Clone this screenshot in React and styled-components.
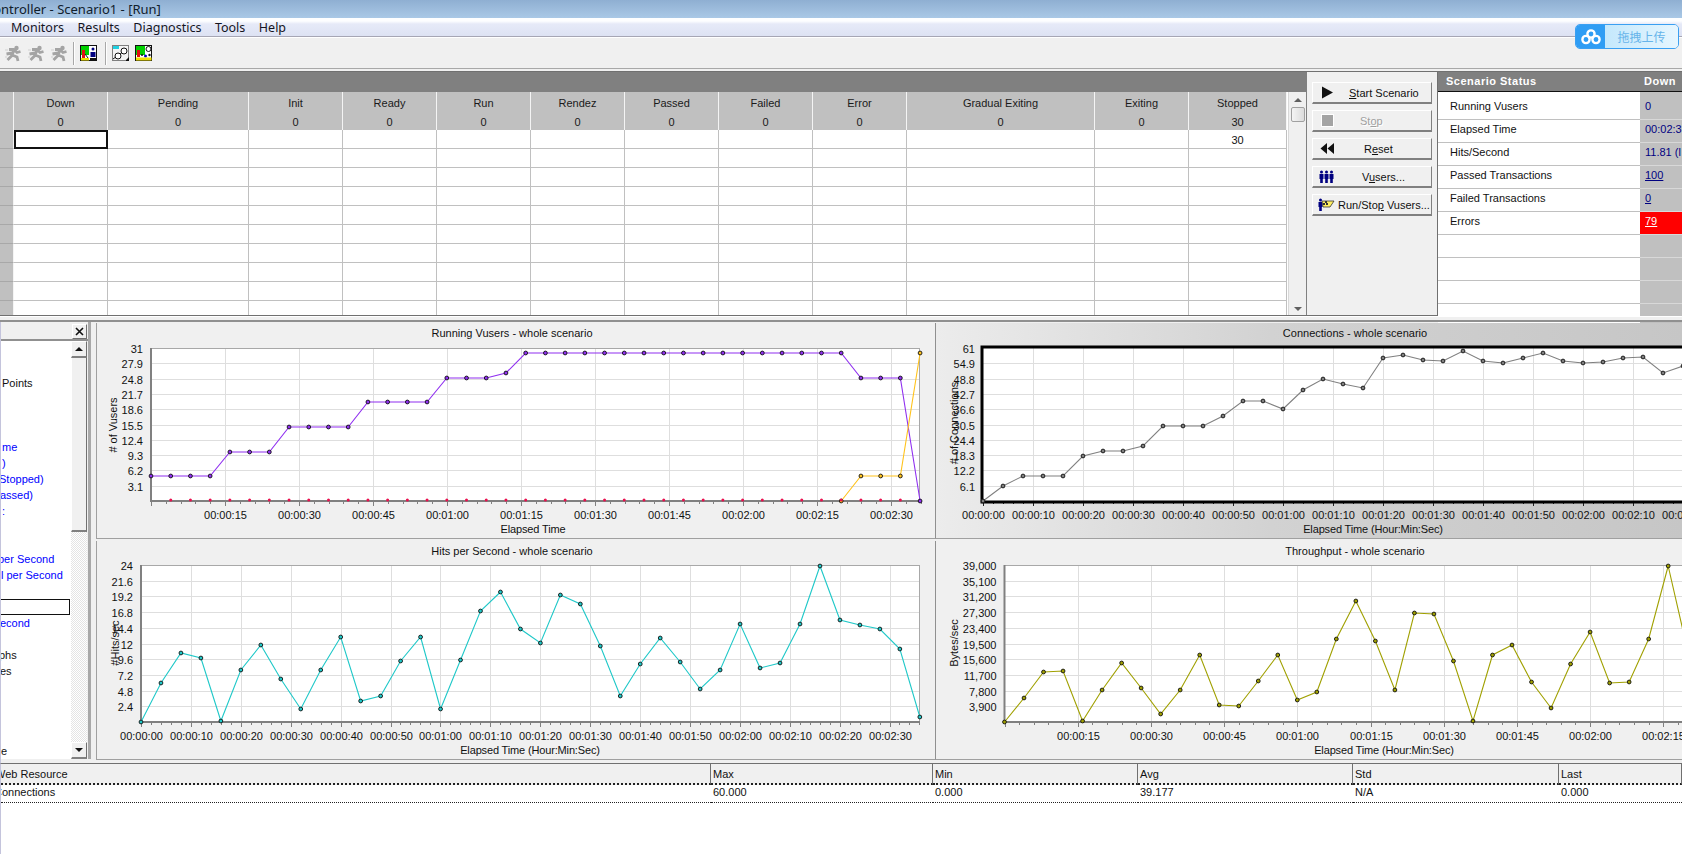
import React from 'react';
import styled, { createGlobalStyle } from 'styled-components';

const Global = createGlobalStyle`
  html, body { margin: 0; padding: 0; background: #f0f0f0; }
  * { box-sizing: border-box; }
`;

const FONT = '"Liberation Sans", Arial, sans-serif';

const Page = styled.div`
  position: relative;
  width: 1682px;
  height: 854px;
  overflow: hidden;
  display: flex;
  flex-direction: column;
  background: #f0f0f0;
  font-family: ${FONT};
  font-size: 11px;
  color: #111;
`;

const TitleBar = styled.div`
  height: 18px;
  flex: none;
  display: flex;
  align-items: center;
  overflow: hidden;
  background: linear-gradient(#8fafd2, #a9c8e6);
  font-family: "Noto Sans", sans-serif;
  font-size: 13px;
  color: #10202c;
  white-space: nowrap;
`;
const TitleText = styled.span`
  margin-left: -15px;
`;

const MenuBar = styled.div`
  height: 19px;
  flex: none;
  display: flex;
  align-items: center;
  gap: 13.5px;
  padding-left: 11px;
  background: linear-gradient(#fdfeff 0, #fdfeff 3px, #e6eaf8 6px, #dde2f3 100%);
  border-bottom: 1px solid #a6a6b4;
  font-family: "Noto Sans", sans-serif;
  font-size: 12.5px;
  color: #14141e;
`;

const Toolbar = styled.div`
  height: 31px;
  flex: none;
  display: flex;
  align-items: center;
  padding-left: 4px;
  background: #f0f0f0;
  border-top: 1px solid #fff;
`;
const ToolbarRule = styled.div`
  height: 3px;
  flex: none;
  border-top: 1px solid #a8a8a8;
  background: #f0f0f0;
`;
const ToolIcon = styled.svg`
  width: 18px;
  height: 17px;
  flex: none;
  margin-right: ${p => p.$gap || 0}px;
  display: block;
`;
const ToolSep = styled.div`
  width: 1px;
  height: 23px;
  flex: none;
  margin-right: ${p => p.$after}px;
  background: #a8a8a8;
  box-shadow: 1px 0 0 #fff;
`;

const TopPane = styled.div`
  height: 245px;
  flex: none;
  display: flex;
  border-top: 1px solid #707070;
  border-bottom: 1px solid #707070;
  background: #f0f0f0;
`;
const GridSide = styled.div`
  width: 1307px;
  flex: none;
  display: flex;
  flex-direction: column;
  border-right: 1px solid #808080;
`;
const GreyBand = styled.div`
  height: 20px;
  flex: none;
  background: #808080;
`;
const GridBody = styled.div`
  flex: 1;
  display: flex;
  min-height: 0;
`;
const VuserGrid = styled.div`
  width: 1288px;
  flex: none;
  overflow: hidden;
  display: grid;
  grid-template-columns: 14px 94px 141px repeat(7, 94px) 188px 94px 98px;
  grid-template-rows: 38px;
  grid-auto-rows: 19px;
  background: #fff;
`;
const HeadCell = styled.div`
  display: flex;
  flex-direction: column;
  align-items: center;
  justify-content: center;
  gap: 7px;
  padding-top: 3px;
  background: #c0c0c0;
  border-right: 1px solid #f4f4f4;
  color: #1a1a1a;
  line-height: 12px;
  &:last-child { border-right: 0; }
`;
const Gutter = styled.div`
  background: #c0c0c0;
  border-right: 1px solid #f4f4f4;
  border-bottom: 1px solid #a8a8a8;
`;
const Cell = styled.div`
  display: flex;
  align-items: center;
  justify-content: center;
  padding-top: 2px;
  border-right: 1px solid #c0c0c0;
  border-bottom: 1px solid #c0c0c0;
  ${p => p.$selected && 'border: 2px solid #111;'}
`;

const GridScroll = styled.div`
  width: 18px;
  flex: none;
  display: flex;
  flex-direction: column;
  align-items: center;
  background: #f0f0f0;
  border-left: 1px solid #d8d8d8;
  padding: 6px 0 4px;
`;
const TinyArrow = styled.div`
  width: 0;
  height: 0;
  border-left: 4px solid transparent;
  border-right: 4px solid transparent;
  ${p => p.$down ? 'border-top: 4px solid #606060;' : 'border-bottom: 4px solid #606060;'}
`;
const GridThumb = styled.div`
  width: 14px;
  height: 15px;
  margin-top: 5px;
  margin-bottom: auto;
  background: linear-gradient(90deg, #f4f4f4, #dcdcdc);
  border: 1px solid #a0a0a0;
  border-radius: 2px;
`;

const ButtonPanel = styled.div`
  width: 130px;
  flex: none;
  display: flex;
  flex-direction: column;
  gap: 6px;
  padding: 10px 5px 0 5px;
  background: #f0f0f0;
`;
const CtlButton = styled.div`
  height: 22px;
  width: 120px;
  flex: none;
  display: flex;
  align-items: center;
  padding-left: ${p => p.$pad}px;
  background: #f0f0f0;
  border-top: 1px solid #fff;
  border-left: 1px solid #fff;
  border-right: 1px solid #808080;
  border-bottom: 2px solid #808080;
  color: ${p => p.$off ? '#a0a0a0' : '#111'};
  text-shadow: ${p => p.$off ? '1px 1px 0 #fff' : 'none'};
  white-space: nowrap;
  u { text-underline-offset: 1px; }
`;
const BtnIcon = styled.svg`
  flex: none;
  display: block;
  margin-right: ${p => p.$gap}px;
`;

const StatusPanel = styled.div`
  flex: 1;
  min-width: 0;
  display: flex;
  flex-direction: column;
  border-left: 1px solid #707070;
`;
const StatusHead = styled.div`
  height: 20px;
  flex: none;
  display: flex;
  align-items: center;
  justify-content: space-between;
  padding: 0 6px 2px 8px;
  background: #808080;
  border-bottom: 1px solid #111;
  color: #fff;
  font-weight: bold;
  letter-spacing: 0.5px;
`;
const StatusRow = styled.div`
  height: ${p => p.$first ? 28 : 23}px;
  flex: none;
  display: grid;
  grid-template-columns: 202px 1fr;
  padding: 0;
`;
const StatusLabel = styled.div`
  display: flex;
  align-items: center;
  padding: 0 0 ${p => p.$first ? 0 : 4}px 12px;
  background: #fff;
  border-bottom: 1px solid #c0c0c0;
`;
const StatusValue = styled.div`
  display: flex;
  align-items: center;
  padding: 0 0 ${p => p.$first ? 0 : 4}px 5px;
  overflow: hidden;
  white-space: nowrap;
  background: ${p => p.$alert ? '#ff0000' : '#c0c0c0'};
  color: ${p => p.$alert ? '#fff' : '#000080'};
  text-decoration: ${p => p.$link ? 'underline' : 'none'};
  border-bottom: 1px solid #d8d8d8;
`;

const Band = styled.div`
  height: 6px;
  flex: none;
  background: #f0f0f0;
  border-top: 1px solid #fff;
  border-bottom: 2px solid #909090;
`;

const MiddlePane = styled.div`
  height: 442px;
  flex: none;
  display: flex;
  border-left: 1px solid #c4c4dc;
  border-bottom: 1px solid #707070;
`;
const LeftPane = styled.div`
  width: 90px;
  flex: none;
  display: flex;
  flex-direction: column;
  height: 437px;
  border-right: 3px solid #a8a8a8;
  background: #f0f0f0;
`;
const PaneHead = styled.div`
  height: 19px;
  flex: none;
  display: flex;
  justify-content: flex-end;
  align-items: flex-start;
  padding: 2px 1px 0 0;
  border-bottom: 2px solid #909090;
`;
const CloseBtn = styled.div`
  width: 15px;
  height: 15px;
  display: flex;
  align-items: center;
  justify-content: center;
  background: #f0f0f0;
  border-top: 1px solid #fff;
  border-left: 1px solid #fff;
  border-right: 1px solid #707070;
  border-bottom: 1px solid #707070;
`;
const PaneBody = styled.div`
  flex: 1;
  display: flex;
  min-height: 0;
`;
const GraphList = styled.div`
  width: 70px;
  flex: none;
  overflow: hidden;
  padding-top: 2px;
  background: #fff;
`;
const GraphItem = styled.div`
  height: 16px;
  display: flex;
  align-items: center;
  padding-left: ${p => p.$boxed ? 0 : 1}px;
  white-space: nowrap;
  color: ${p => p.$blue ? '#0000ff' : '#111'};
  ${p => p.$boxed && 'width: 69px; border: 1px solid #111; border-left: 0;'}
`;
const PaneScroll = styled.div`
  width: 16px;
  flex: none;
  display: flex;
  flex-direction: column;
  background: repeating-conic-gradient(#fff 0 25%, #e4e4e4 0 50%) 0 0 / 2px 2px;
`;
const ScrollBtn = styled.div`
  height: 17px;
  flex: none;
  display: flex;
  align-items: center;
  justify-content: center;
  background: #f0f0f0;
  border-top: 1px solid #fff;
  border-left: 1px solid #fff;
  border-right: 1px solid #707070;
  border-bottom: 2px solid #808080;
  ${p => p.$end && 'margin-top: auto;'}
`;
const BlackArrow = styled.div`
  width: 0;
  height: 0;
  border-left: 4px solid transparent;
  border-right: 4px solid transparent;
  ${p => p.$down ? 'border-top: 4px solid #111;' : 'border-bottom: 4px solid #111;'}
`;
const ScrollTrack = styled.div`
  height: 174px;
  flex: none;
  background: #f0f0f0;
  border-right: 1px solid #707070;
  border-bottom: 2px solid #808080;
  border-left: 1px solid #fff;
`;

const ChartGrid = styled.div`
  margin: 1px 0 0 5px;
  width: 1586px;
  flex: none;
  display: grid;
  grid-template-columns: 840px 746px;
  grid-template-rows: 216px 219px;
  row-gap: 2px;
`;
const ChartPanel = styled.div`
  display: flex;
  flex-direction: column;
  overflow: hidden;
  border-bottom: 1px solid #a0a0a0;
  border-left: ${p => p.$first ? '1px solid #a0a0a0' : '0'};
  border-right: ${p => p.$first ? '1px solid #909090' : '0'};
  background: ${p => p.$active ? 'linear-gradient(90deg, #ececec, #d2d2d2 45%, #c6c6c6)' : '#f0f0f0'};
`;
const ChartTitle = styled.div`
  height: 18px;
  flex: none;
  line-height: 21px;
  text-align: center;
  padding-left: ${p => Math.max(p.$shift * 2, 0)}px;
  padding-right: ${p => Math.max(-p.$shift * 2, 0)}px;
  white-space: nowrap;
`;
const XTitle = styled.div`
  height: 14px;
  flex: none;
  line-height: 14px;
  letter-spacing: -0.15px;
  text-align: center;
  padding-left: ${p => Math.max(p.$shift * 2, 0)}px;
  padding-right: ${p => Math.max(-p.$shift * 2, 0)}px;
  white-space: nowrap;
`;
const Plot = styled.svg`
  display: block;
  flex: none;
  font-family: ${FONT};
  font-size: 11px;
`;

const SummaryTable = styled.div`
  flex: 1;
  background: #fff;
  border-left: 1px solid #c4c4dc;
  overflow: hidden;
`;
const SummaryGrid = styled.div`
  display: grid;
  grid-template-columns: 710px 222px 205px 215px 206px 1fr;
  grid-template-rows: 21px 18px;
`;
const SummaryHead = styled.div`
  display: flex;
  align-items: center;
  padding-left: 2px;
  background: #f0f0f0;
  border-right: 1px solid #707070;
  border-bottom: 2px dotted #222;
  overflow: hidden;
  white-space: nowrap;
  &:last-of-type { border-right: 0; }
`;
const SummaryCell = styled.div`
  display: flex;
  align-items: center;
  padding: 0 0 3px 2px;
  border-bottom: 1px dotted #222;
  white-space: nowrap;
`;
const CutText = styled.span`
  margin-left: ${p => p.$cut}px;
`;

const UploadBadge = styled.div`
  position: absolute;
  top: 24px;
  left: 1575px;
  width: 104px;
  height: 25px;
  display: flex;
  border-radius: 5px;
  overflow: hidden;
  border: 1px solid #3aa0f2;
`;
const UploadIcon = styled.div`
  width: 29px;
  flex: none;
  display: flex;
  align-items: center;
  justify-content: center;
  background: #2f9df4;
`;
const UploadText = styled.div`
  flex: 1;
  display: flex;
  align-items: center;
  justify-content: center;
  background: linear-gradient(90deg, #c4e8fc, #e6f6ff);
  color: #66b4ea;
  font-family: "Noto Sans CJK SC", sans-serif;
  font-size: 12px;
`;

const HEADERS = [
  ['Down', '0'], ['Pending', '0'], ['Init', '0'], ['Ready', '0'], ['Run', '0'], ['Rendez', '0'],
  ['Passed', '0'], ['Failed', '0'], ['Error', '0'], ['Gradual Exiting', '0'], ['Exiting', '0'], ['Stopped', '30'],
];

const STATUS = [
  { label: 'Running Vusers', value: '0' },
  { label: 'Elapsed Time', value: '00:02:3' },
  { label: 'Hits/Second', value: '11.81 (l' },
  { label: 'Passed Transactions', value: '100', link: true },
  { label: 'Failed Transactions', value: '0', link: true },
  { label: 'Errors', value: '79', link: true, alert: true },
  { label: '', value: '' }, { label: '', value: '' }, { label: '', value: '' }, { label: '', value: '' },
];

// the list is scrolled sideways in the screenshot, cut says how far a row sticks out on the left
const GRAPH_ROWS = {
  2: { text: 'Points' }, 6: { text: 'me', blue: true }, 7: { text: ')', blue: true },
  8: { text: 'Stopped)', blue: true, cut: -3 }, 9: { text: 'assed)', blue: true, cut: -2 }, 10: { text: ':', blue: true },
  13: { text: 'per Second', blue: true, cut: -4 }, 14: { text: 'l per Second', blue: true, cut: -1 }, 16: { boxed: true },
  17: { text: 'econd', blue: true, cut: -2 }, 19: { text: 'phs', cut: -3 }, 20: { text: 'es', cut: -2 }, 25: { text: 'e', cut: -1 },
};

const vuserPurple = [25, 25, 25, 25, 49, 49, 49, 74, 74, 74, 74, 99, 99, 99, 99, 123, 123, 123, 128,
  ...Array(17).fill(148), 123, 123, 123, 0];
const vuserYellow = [...Array(36).fill(0), 25, 25, 25, 148];
const vuserRed = Array(39).fill(0);

const CHARTS = [
  {
    title: 'Running Vusers - whole scenario', xTitle: 'Elapsed Time', titleShift: -4, xShift: 17,
    yTitle: '# of Vusers', yTitleX: 16, yTitleY: 84,
    top: 7, bottom: 160, left: 54, right: 823, height: 181, labelY: 174,
    yLabels: ['31', '27.9', '24.8', '21.7', '18.6', '15.5', '12.4', '9.3', '6.2', '3.1'],
    major: 15, perSec: 74 / 15, maxSec: 156, skipZero: true, step: 19.72,
    series: [
      { color: '#8f2ff0', data: vuserPurple }, { color: '#ffc21a', data: vuserYellow, from: 35 },
      { color: '#e8104e', data: vuserRed, noLine: true, from: 1, small: true },
    ],
  },
  {
    title: 'Connections - whole scenario', xTitle: 'Elapsed Time (Hour:Min:Sec)', active: true, titleShift: 46, xShift: 64,
    yTitle: '# of Connections', yTitleX: 18, yTitleY: 82,
    top: 7, bottom: 160, left: 47, right: 760, height: 181, labelY: 174,
    yLabels: ['61', '54.9', '48.8', '42.7', '36.6', '30.5', '24.4', '18.3', '12.2', '6.1'],
    major: 10, perSec: 5.003, maxSec: 150, step: 20,
    series: [{
      color: '#808080',
      data: [0, 15, 25, 25, 25, 45, 50, 50, 55, 75, 75, 75, 85, 100, 100, 92, 111, 122, 117, 113, 143, 146, 141,
        140, 150, 140, 138, 143, 148, 140, 138, 139, 143, 144, 128, 135],
    }],
  },
  {
    title: 'Hits per Second - whole scenario', xTitle: 'Elapsed Time (Hour:Min:Sec)', titleShift: -4, xShift: 14,
    yTitle: '#Hits/sec', yTitleX: 18, yTitleY: 84,
    top: 6, bottom: 163, left: 44, right: 823, height: 184, labelY: 177,
    yLabels: ['24', '21.6', '19.2', '16.8', '14.4', '12', '9.6', '7.2', '4.8', '2.4'],
    major: 10, perSec: 4.99, maxSec: 156, step: 19.97,
    series: [{
      color: '#1fc8c8',
      data: [0, 39, 69, 64, 1, 52, 77, 43, 13, 52, 85, 21, 26, 61, 85, 13, 62, 111, 130, 93, 79, 127, 118, 76, 26,
        58, 84, 60, 33, 52, 98, 54, 59, 98, 156, 102, 97, 93, 73, 5],
    }],
  },
  {
    title: 'Throughput - whole scenario', xTitle: 'Elapsed Time (Hour:Min:Sec)', titleShift: 46, xShift: 75,
    yTitle: 'Bytes/sec', yTitleX: 18, yTitleY: 84,
    top: 6, bottom: 163, left: 68.5, right: 760, height: 184, labelY: 177,
    yLabels: ['39,000', '35,100', '31,200', '27,300', '23,400', '19,500', '15,600', '11,700', '7,800', '3,900'],
    major: 15, perSec: 4.88, maxSec: 156, skipZero: true, step: 19.52,
    series: [{
      color: '#a0a000',
      data: [0, 24, 50, 51, 1, 32, 59, 34, 8, 32, 67, 17, 16, 41, 67, 22, 30, 83, 121, 81, 32, 109, 108, 61, 1, 67,
        77, 40, 14, 58, 90, 39, 40, 83, 156, 71],
    }],
  },
];

const stamp = sec => {
  const pad = n => String(n).padStart(2, '0');
  return `00:${pad(Math.floor(sec / 60))}:${pad(sec % 60)}`;
};

function Chart({ c, width }) {
  const gap = (c.bottom - c.top) / 10;
  const axis = c.active ? '#000' : '#808080';
  const minor = c.major / 5;
  const ticks = [];
  for (let s = 0; s <= c.maxSec; s += minor) ticks.push(s);
  const right = Math.min(c.right, width + 10);
  return (
    <Plot width={width} height={c.height}>
      <rect x={c.left} y={c.top} width={right - c.left} height={c.bottom - c.top} fill="#fff" />
      {c.yLabels.map((l, i) => {
        const y = Math.round(c.top + i * gap) + 0.5;
        return (
          <g key={l}>
            {i > 0 && <line x1={c.left} x2={right} y1={y} y2={y} stroke="#dedede" />}
            <text x={c.left - 8} y={y} dominantBaseline="central" textAnchor="end" fill="#111">{l}</text>
          </g>
        );
      })}
      {ticks.map(s => {
        const x = Math.round(c.left + s * c.perSec) + 0.5;
        const isMajor = s % c.major === 0;
        return (
          <g key={s}>
            {isMajor && s > 0 && <line x1={x} x2={x} y1={c.top} y2={c.bottom} stroke="#dedede" />}
            <line x1={x} x2={x} y1={c.bottom} y2={c.bottom + (isMajor ? 5 : 3)} stroke={c.active ? '#222' : '#808080'} />
            {isMajor && !(c.skipZero && s === 0) && (
              <text x={x} y={c.labelY} textAnchor="middle" dominantBaseline="central" fill="#111">{stamp(s)}</text>
            )}
          </g>
        );
      })}
      {c.active ? (
        <rect x={c.left - 1} y={c.top - 1} width={right - c.left + 10} height={c.bottom - c.top + 2}
          fill="none" stroke={axis} strokeWidth="3" />
      ) : (
        <g>
          <line x1={c.left} x2={right} y1={c.top + 0.5} y2={c.top + 0.5} stroke="#a8a8a8" />
          <line x1={right - 0.5} x2={right - 0.5} y1={c.top} y2={c.bottom} stroke="#a8a8a8" />
          <line x1={c.left} x2={c.left} y1={c.top} y2={c.bottom + 1} stroke={axis} strokeWidth="2" />
          <line x1={c.left} x2={right} y1={c.bottom} y2={c.bottom} stroke={axis} strokeWidth="2" />
        </g>
      )}
      {c.series.map(s => {
        const start = s.from || 0;
        const pts = s.data.map((h, i) => [c.left + i * c.step, c.bottom - h]).slice(start);
        return (
          <g key={s.color}>
            {!s.noLine && <polyline points={pts.map(p => p.join(',')).join(' ')} fill="none" stroke={s.color} strokeWidth="1.1" />}
            {pts.map(([x, y], i) => (
              s.small
                ? <circle key={i} cx={x} cy={y - 1} r="1.5" fill={s.color} />
                : <circle key={i} cx={x} cy={y} r="1.9" fill={s.color} stroke="#111" strokeWidth="0.9" />
            ))}
          </g>
        );
      })}
      <text x={c.yTitleX} y={c.yTitleY} textAnchor="middle" dominantBaseline="central" fill="#111"
        transform={`rotate(-90 ${c.yTitleX} ${c.yTitleY})`}>{c.yTitle}</text>
    </Plot>
  );
}

function Runner({ gap }) {
  return (
    <ToolIcon viewBox="0 0 18 17" $gap={gap}>
      <circle cx="12.5" cy="3" r="2.2" fill="#a4a4a4" />
      <path d="M5 4.5h5l3 3 3.5-1M10 4.5l-2 6-4.5 4.5M8 10l5 2 1 4M8 8L2.5 9" fill="none" stroke="#a4a4a4" strokeWidth="2.8" />
      <path d="M1 5h3M1 12h2" stroke="#d0d0d0" strokeWidth="1" />
    </ToolIcon>
  );
}

function MonitorIcon({ gap }) {
  return (
    <ToolIcon viewBox="0 0 18 17" $gap={gap}>
      <rect x="0.5" y="0.5" width="16" height="15" fill="#fff" stroke="#111" />
      <rect x="1" y="1" width="8" height="9" fill="#00d000" />
      <rect x="2" y="5" width="3" height="8" fill="#e01010" />
      <path d="M5 9l3 4" stroke="#111" strokeWidth="1" />
      <rect x="1" y="13" width="8" height="2.5" fill="#f0e000" />
      <circle cx="13" cy="4" r="1.5" fill="#000080" />
      <path d="M10.5 12V7h5v5z" fill="#000080" />
      <rect x="10" y="13" width="6" height="2" fill="#111" />
    </ToolIcon>
  );
}

function TapeIcon({ gap }) {
  return (
    <ToolIcon viewBox="0 0 18 17" $gap={gap}>
      <rect x="0.5" y="0.5" width="16" height="15" fill="#f4f4f4" stroke="#808080" />
      <rect x="1" y="1" width="6" height="3" fill="#20d0e0" />
      <path d="M1 14l14-10" stroke="#111" strokeWidth="1" />
      <circle cx="12" cy="6" r="3" fill="#fff" stroke="#111" />
      <circle cx="6" cy="11" r="3" fill="#fff" stroke="#111" />
      <path d="M14 15l3-3v4h-3z" fill="#111" />
    </ToolIcon>
  );
}

function ClockGraphIcon() {
  return (
    <ToolIcon viewBox="0 0 18 17">
      <rect x="0.5" y="0.5" width="16" height="15" fill="#fff" stroke="#111" />
      <rect x="1" y="1" width="9" height="9" fill="#00d000" />
      <rect x="2" y="5" width="3" height="7" fill="#e01010" />
      <circle cx="7" cy="10" r="1" fill="#111" />
      <circle cx="10.5" cy="11" r="1.5" fill="#0000c0" />
      <circle cx="14.5" cy="10" r="1.2" fill="#111" />
      <circle cx="13.5" cy="4" r="2.5" fill="#fff" stroke="#111" />
      <rect x="1" y="12.5" width="15.5" height="3" fill="#f0e000" />
    </ToolIcon>
  );
}

function People({ x }) {
  return (
    <g fill="#000080" transform={`translate(${x} 0)`}>
      <circle cx="2.5" cy="2" r="1.5" />
      <path d="M0.5 4h4v5h-0.7v4h-2.6V9H0.5z" />
    </g>
  );
}

export default function App() {
  const rows = Array.from({ length: 10 });
  const cols = HEADERS.length;
  return (
    <Page>
      <Global />
      <TitleBar><TitleText>Controller - Scenario1 - [Run]</TitleText></TitleBar>
      <MenuBar>
        <span>Monitors</span><span>Results</span><span>Diagnostics</span><span>Tools</span><span>Help</span>
      </MenuBar>
      <Toolbar>
        <Runner gap={5} /><Runner gap={5} /><Runner gap={5} />
        <ToolSep $after={6} />
        <MonitorIcon gap={7} />
        <ToolSep $after={6} />
        <TapeIcon gap={5} />
        <ClockGraphIcon />
      </Toolbar>
      <ToolbarRule />

      <TopPane>
        <GridSide>
          <GreyBand />
          <GridBody>
            <VuserGrid>
              <HeadCell />
              {HEADERS.map(([name, n]) => (
                <HeadCell key={name}><span>{name}</span><span>{n}</span></HeadCell>
              ))}
              {rows.map((_, r) => (
                <React.Fragment key={r}>
                  <Gutter />
                  {HEADERS.map((h, i) => (
                    <Cell key={h[0]} $selected={r === 0 && i === 0}>
                      {r === 0 && i === cols - 1 ? '30' : ''}
                    </Cell>
                  ))}
                </React.Fragment>
              ))}
            </VuserGrid>
            <GridScroll>
              <TinyArrow />
              <GridThumb />
              <TinyArrow $down />
            </GridScroll>
          </GridBody>
        </GridSide>

        <ButtonPanel>
          <CtlButton $pad={8}>
            <BtnIcon width="13" height="13" viewBox="0 0 13 13" $gap={15}><path d="M1 0.5L12 6.5L1 12.5z" fill="#111" /></BtnIcon>
            <span><u>S</u>tart Scenario</span>
          </CtlButton>
          <CtlButton $pad={8} $off>
            <BtnIcon width="13" height="13" viewBox="0 0 13 13" $gap={26}><rect x="0.5" y="0.5" width="12" height="12" fill="#a4a4a4" stroke="#fff" /></BtnIcon>
            <span>St<u>o</u>p</span>
          </CtlButton>
          <CtlButton $pad={7}>
            <BtnIcon width="14" height="13" viewBox="0 0 14 13" $gap={30}><path d="M7 1v11L0.5 6.5zM14 1v11L7.5 6.5z" fill="#111" /></BtnIcon>
            <span>R<u>e</u>set</span>
          </CtlButton>
          <CtlButton $pad={6}>
            <BtnIcon width="15" height="13" viewBox="0 0 15 13" $gap={28}><People x={0} /><People x={5} /><People x={10} /></BtnIcon>
            <span>V<u>u</u>sers...</span>
          </CtlButton>
          <CtlButton $pad={5}>
            <BtnIcon width="17" height="13" viewBox="0 0 17 13" $gap={3}>
              <People x={0} />
              <path d="M4 3h12l-4 6H5z" fill="#ffef60" stroke="#333" strokeWidth="0.8" />
              <path d="M5 5h2v2H5zM8 5h2v2H8zM7 3h2v2H7z" fill="#333" />
            </BtnIcon>
            <span>Run/Sto<u>p</u> Vusers...</span>
          </CtlButton>
        </ButtonPanel>

        <StatusPanel>
          <StatusHead><span>Scenario Status</span><span>Down</span></StatusHead>
          {STATUS.map((s, i) => (
            <StatusRow key={i} $first={i === 0}>
              <StatusLabel $first={i === 0}>{s.label}</StatusLabel>
              <StatusValue $first={i === 0} $alert={s.alert} $link={s.link}>{s.value}</StatusValue>
            </StatusRow>
          ))}
        </StatusPanel>
      </TopPane>

      <Band />

      <MiddlePane>
        <LeftPane>
          <PaneHead>
            <CloseBtn>
              <svg width="9" height="9" viewBox="0 0 9 9"><path d="M1 1l7 7M8 1L1 8" stroke="#111" strokeWidth="1.6" /></svg>
            </CloseBtn>
          </PaneHead>
          <PaneBody>
            <GraphList>
              {Array.from({ length: 26 }).map((_, i) => {
                const g = GRAPH_ROWS[i] || {};
                return (
                  <GraphItem key={i} $blue={g.blue} $boxed={g.boxed}>
                    <CutText $cut={g.cut || 0}>{g.text}</CutText>
                  </GraphItem>
                );
              })}
            </GraphList>
            <PaneScroll>
              <ScrollBtn><BlackArrow /></ScrollBtn>
              <ScrollTrack />
              <ScrollBtn $end><BlackArrow $down /></ScrollBtn>
            </PaneScroll>
          </PaneBody>
        </LeftPane>

        <ChartGrid>
          {CHARTS.map((c, i) => (
            <ChartPanel key={c.title} $first={i % 2 === 0} $active={c.active}>
              <ChartTitle $shift={c.titleShift}>{c.title}</ChartTitle>
              <Chart c={c} width={i % 2 === 0 ? 838 : 746} />
              <XTitle $shift={c.xShift}>{c.xTitle}</XTitle>
            </ChartPanel>
          ))}
        </ChartGrid>
      </MiddlePane>

      <SummaryTable>
        <SummaryGrid>
          <SummaryHead><CutText $cut={-8}>Web Resource</CutText></SummaryHead>
          <SummaryHead>Max</SummaryHead>
          <SummaryHead>Min</SummaryHead>
          <SummaryHead>Avg</SummaryHead>
          <SummaryHead>Std</SummaryHead>
          <SummaryHead>Last</SummaryHead>
          <SummaryCell><CutText $cut={-9}>Connections</CutText></SummaryCell>
          <SummaryCell>60.000</SummaryCell>
          <SummaryCell>0.000</SummaryCell>
          <SummaryCell>39.177</SummaryCell>
          <SummaryCell>N/A</SummaryCell>
          <SummaryCell>0.000</SummaryCell>
        </SummaryGrid>
      </SummaryTable>

      <UploadBadge>
        <UploadIcon>
          <svg width="20" height="16" viewBox="0 0 20 16" fill="none" stroke="#fff" strokeWidth="2.4">
            <circle cx="10" cy="5" r="3.6" />
            <circle cx="5" cy="10.5" r="3.6" />
            <circle cx="15" cy="10.5" r="3.6" />
          </svg>
        </UploadIcon>
        <UploadText>拖拽上传</UploadText>
      </UploadBadge>
    </Page>
  );
}
